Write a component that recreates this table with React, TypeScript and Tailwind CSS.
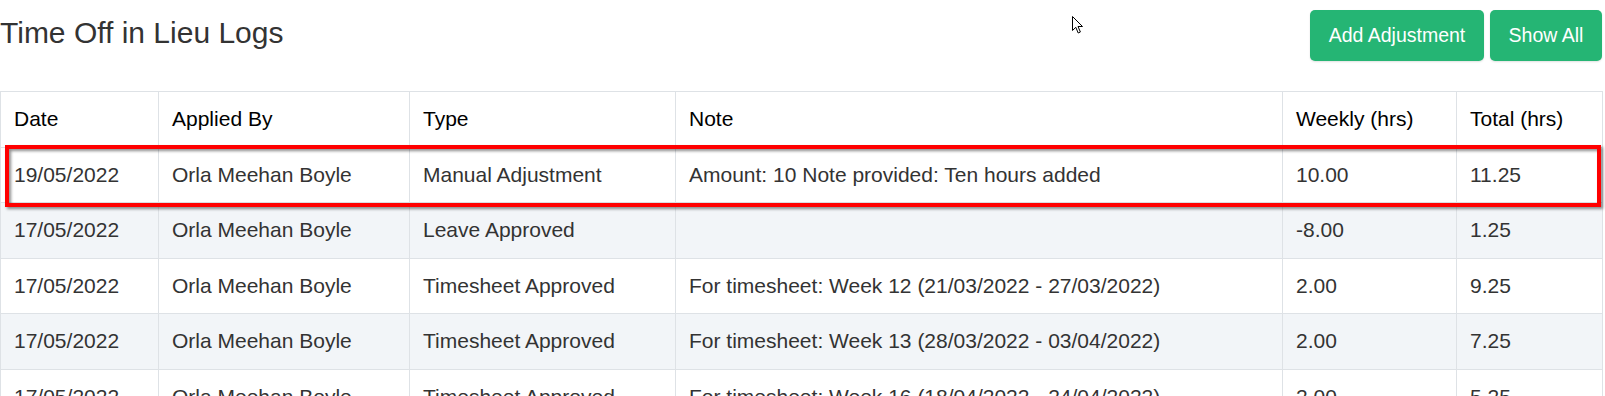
import React from "react";

const rows = [
  ["19/05/2022", "Orla Meehan Boyle", "Manual Adjustment", "Amount: 10 Note provided: Ten hours added", "10.00", "11.25"],
  ["17/05/2022", "Orla Meehan Boyle", "Leave Approved", "", "-8.00", "1.25"],
  ["17/05/2022", "Orla Meehan Boyle", "Timesheet Approved", "For timesheet: Week 12 (21/03/2022 - 27/03/2022)", "2.00", "9.25"],
  ["17/05/2022", "Orla Meehan Boyle", "Timesheet Approved", "For timesheet: Week 13 (28/03/2022 - 03/04/2022)", "2.00", "7.25"],
  ["17/05/2022", "Orla Meehan Boyle", "Timesheet Approved", "For timesheet: Week 16 (18/04/2022 - 24/04/2022)", "2.00", "5.25"],
];

const headers = ["Date", "Applied By", "Type", "Note", "Weekly (hrs)", "Total (hrs)"];

export default function App() {
  return (
    <div
      className="relative h-[396px] w-[1605px] overflow-hidden bg-white text-[#333]"
      style={{ fontFamily: '"Liberation Sans", Arial, sans-serif' }}
    >
      <div className="flex items-start justify-between pt-[10px] pr-[3px]">
        <h1 className="mt-[5px] text-[30px] leading-[36px] font-normal text-[#333]">Time Off in Lieu Logs</h1>
        <div className="flex gap-[6px]">
          <button className="h-[51px] w-[174px] rounded-[5px] bg-[#25b574] text-[19.5px] text-white shadow-[0_1px_2px_rgba(0,0,0,0.12)]">
            Add Adjustment
          </button>
          <button className="h-[51px] w-[112px] rounded-[5px] bg-[#25b574] text-[19.5px] text-white shadow-[0_1px_2px_rgba(0,0,0,0.12)]">
            Show All
          </button>
        </div>
      </div>

      <div className="relative mt-[30px] w-[1602px]">
        <table className="w-[1602px] table-fixed border-collapse text-[21px]">
          <colgroup>
            <col className="w-[158px]" />
            <col className="w-[251px]" />
            <col className="w-[266px]" />
            <col className="w-[607px]" />
            <col className="w-[174px]" />
            <col className="w-[146px]" />
          </colgroup>
          <thead>
            <tr>
              {headers.map((h) => (
                <th
                  key={h}
                  className="border border-[#dee2e6] px-[13px] py-[12px] text-left font-normal leading-[30.5px] text-black"
                >
                  {h}
                </th>
              ))}
            </tr>
          </thead>
          <tbody>
            {rows.map((r, i) => (
              <tr key={i} className={i % 2 === 1 ? "bg-[#f2f5f8]" : "bg-white"}>
                {r.map((c, j) => (
                  <td
                    key={j}
                    className="border border-[#dee2e6] px-[13px] py-[12px] leading-[30.5px] whitespace-nowrap text-[#333]"
                  >
                    {c}
                  </td>
                ))}
              </tr>
            ))}
          </tbody>
        </table>
        <div className="pointer-events-none absolute top-[54px] left-[5px] h-[62px] w-[1596px] border-4 border-[#ff0000] drop-shadow-[2px_2px_1.5px_rgba(0,0,0,0.45)]" />
      </div>

      <svg
        className="absolute left-[1072px] top-[16px]"
        width="12"
        height="19"
        viewBox="0 0 12 19"
      >
        <path
          d="M0.5 0.5 L0.5 14.5 L3.8 11.3 L6.2 17 L8.4 16 L6 10.5 L10.5 10.5 Z"
          fill="white"
          stroke="black"
          strokeWidth="1"
          strokeLinejoin="miter"
        />
      </svg>
    </div>
  );
}
